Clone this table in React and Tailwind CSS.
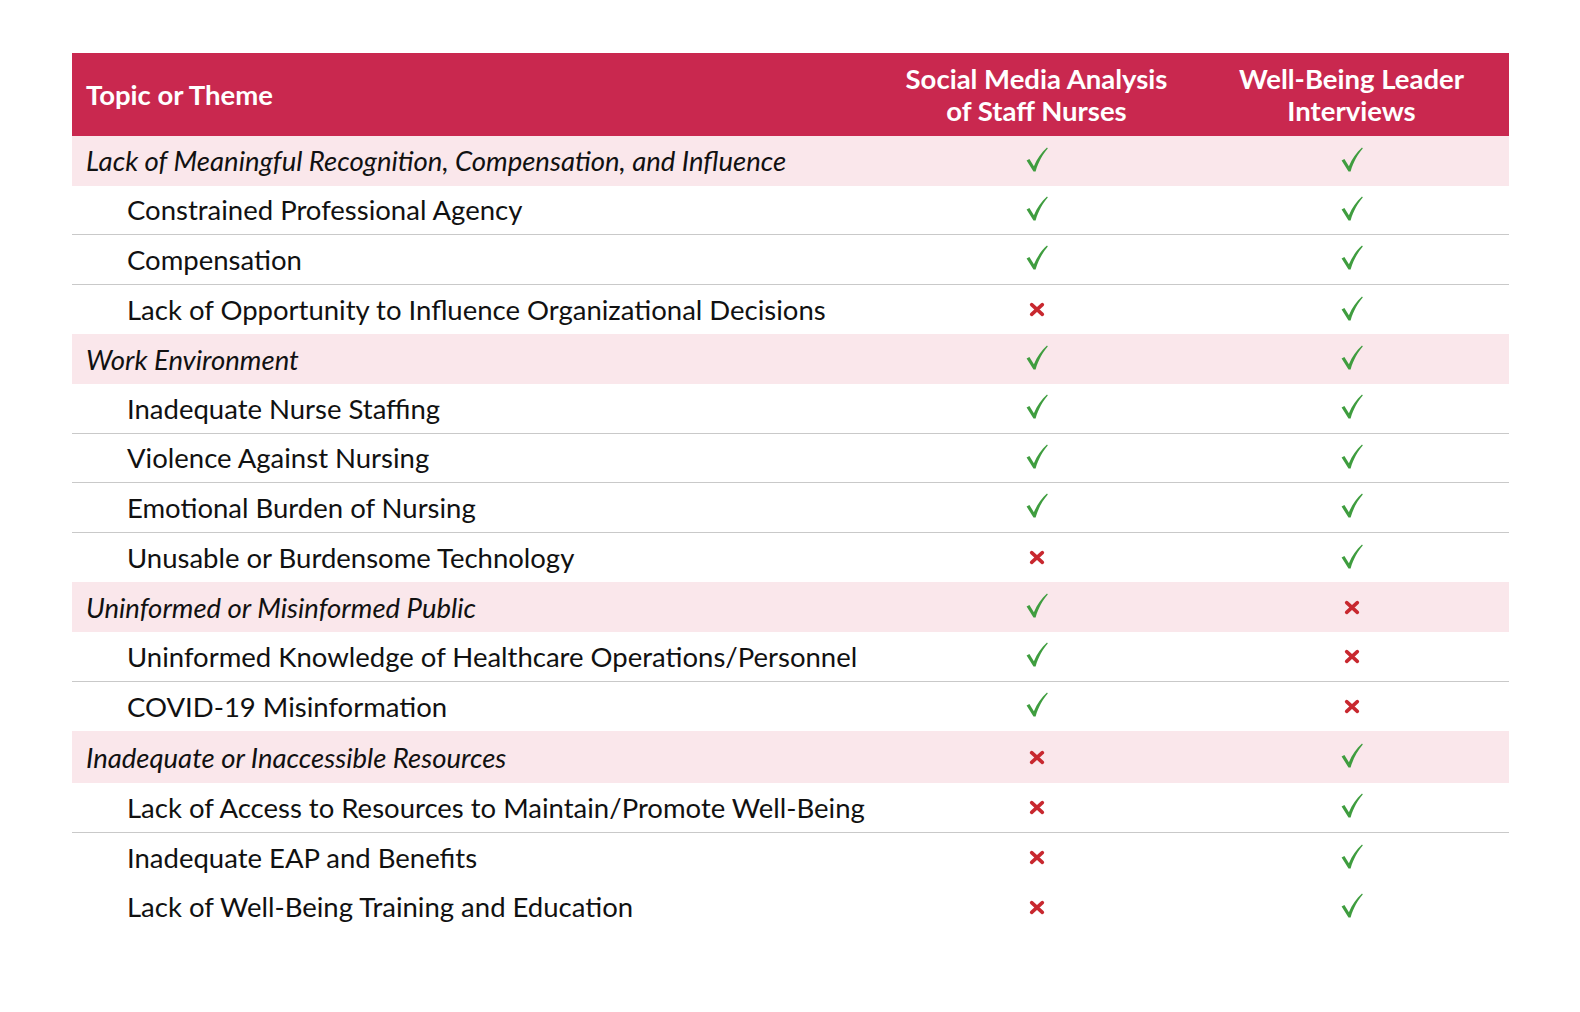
const rows = [
  { label: 'Lack of Meaningful Recognition, Compensation, and Influence', theme: true, a: true, b: true },
  { label: 'Constrained Professional Agency', a: true, b: true, line: true },
  { label: 'Compensation', a: true, b: true, line: true },
  { label: 'Lack of Opportunity to Influence Organizational Decisions', a: false, b: true },
  { label: 'Work Environment', theme: true, a: true, b: true },
  { label: 'Inadequate Nurse Staffing', a: true, b: true, line: true },
  { label: 'Violence Against Nursing', a: true, b: true, line: true },
  { label: 'Emotional Burden of Nursing', a: true, b: true, line: true },
  { label: 'Unusable or Burdensome Technology', a: false, b: true },
  { label: 'Uninformed or Misinformed Public', theme: true, a: true, b: false },
  { label: 'Uninformed Knowledge of Healthcare Operations/Personnel', a: true, b: false, line: true },
  { label: 'COVID-19 Misinformation', a: true, b: false },
  { label: 'Inadequate or Inaccessible Resources', theme: true, tall: true, a: false, b: true },
  { label: 'Lack of Access to Resources to Maintain/Promote Well-Being', a: false, b: true, line: true },
  { label: 'Inadequate EAP and Benefits', a: false, b: true },
  { label: 'Lack of Well-Being Training and Education', a: false, b: true },
];

const Check = () => (
  <svg width="22" height="25" viewBox="0 0 22 25" className="-mt-[3px] text-[#3f9d3f]">
    <path
      d="M0.6 13.6 L3.4 12 L7.9 19.2 C11 12 15.4 5.6 21 0.6 L21.8 1.5 C16.6 7.6 12.6 14.6 9.6 24.4 L7.5 24.4 Z"
      fill="currentColor"
    />
  </svg>
);

const Cross = () => (
  <svg width="16" height="15" viewBox="0 0 15 14" className="text-[#c8282f]">
    <path d="M2.5 2.5 L12.5 11.5 M12.5 2.5 L2.5 11.5" stroke="currentColor" strokeWidth="3.4" strokeLinecap="round" />
  </svg>
);

const Mark = ({ ok }) => (
  <div className="flex w-[315px] items-center justify-center">{ok ? <Check /> : <Cross />}</div>
);

export default function App() {
  return (
    <div className="min-h-screen w-full bg-white pt-[53px] pl-[72px] font-['Lato',sans-serif] text-[#111]">
      <div className="w-[1437px]">
        <div className="flex h-[83px] items-center bg-[#c9284f] text-[27.5px] font-bold leading-[32px] text-white">
          <div className="w-[807px] pl-[14px]">Topic or Theme</div>
          <div className="w-[315px] text-center">
            Social Media Analysis
            <br />
            of Staff Nurses
          </div>
          <div className="w-[315px] text-center">
            Well-Being Leader
            <br />
            Interviews
          </div>
        </div>
        {rows.map((r) => (
          <div
            key={r.label}
            className={`box-border flex items-center text-[27.5px] ${r.tall ? 'h-[52px]' : 'h-[49.6px]'} ${
              r.theme ? 'bg-[#fae7eb] italic' : 'bg-white'
            } ${r.line ? 'border-b border-[#c9c9c9]' : ''}`}
          >
            <div className={`w-[807px] ${r.theme ? 'pl-[14px]' : 'pl-[55px]'}`}>{r.label}</div>
            <Mark ok={r.a} />
            <Mark ok={r.b} />
          </div>
        ))}
      </div>
    </div>
  );
}
